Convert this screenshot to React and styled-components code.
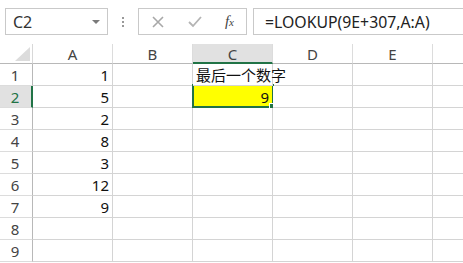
import styled, { createGlobalStyle } from 'styled-components';

const GlobalStyle = createGlobalStyle`
  html, body {
    margin: 0;
    background: #ffffff;
    overflow: hidden;
  }
  body {
    font-family: 'Noto Sans', 'Noto Sans CJK SC', sans-serif;
  }
`;

const GREEN = '#217346';
const COLS = ['A', 'B', 'C', 'D', 'E', ''];
const VALUES = { 1: '1', 2: '5', 3: '2', 4: '8', 5: '3', 6: '12', 7: '9' };

export default function App() {
  const rows = [1, 2, 3, 4, 5, 6, 7, 8, 9];
  return (
    <>
      <GlobalStyle />
      <Page>
        <FormulaBar>
          <NameBox>
            C2
            <DropArrow />
          </NameBox>
          <Grip>
            <i />
            <i />
            <i />
          </Grip>
          <ButtonBox>
            <svg width="14" height="14" viewBox="0 0 14 14">
              <path d="M2 2 L12 12 M12 2 L2 12" stroke="#a8a8a8" strokeWidth="1.6" fill="none" />
            </svg>
            <svg width="16" height="14" viewBox="0 0 16 14">
              <path d="M2 7 L6 11 L14 2" stroke="#b4b4b4" strokeWidth="1.8" fill="none" />
            </svg>
            <Fx>
              f<sub>x</sub>
            </Fx>
          </ButtonBox>
          <FormulaInput>=LOOKUP(9E+307,A:A)</FormulaInput>
        </FormulaBar>

        <Sheet>
          <Corner>
            <svg width="15" height="14" viewBox="0 0 15 14">
              <path d="M15 0 L15 14 L0 14 Z" fill="#dcdcdc" />
            </svg>
          </Corner>
          {COLS.map((c) => (
            <ColHead key={c || 'F'} $active={c === 'C'}>
              {c}
            </ColHead>
          ))}
          {rows.map((r) => (
            <Row key={r}>
              <RowHead $active={r === 2}>{r}</RowHead>
              <Cell $num>{VALUES[r] || ''}</Cell>
              <Cell />
              {r === 1 && <Cell $label>最后一个数字</Cell>}
              {r === 2 && (
                <Cell $num $fill="#ffff00">
                  9
                  <Selection>
                    <Handle />
                  </Selection>
                </Cell>
              )}
              {r > 2 && <Cell />}
              <Cell />
              <Cell />
              <Cell />
            </Row>
          ))}
        </Sheet>
      </Page>
    </>
  );
}

const Page = styled.div`
  width: 463px;
  height: 263px;
  overflow: hidden;
`;

const FormulaBar = styled.div`
  display: flex;
  align-items: flex-start;
  height: 44px;
  padding: 8px 0 0 5px;
  box-sizing: border-box;
`;

const Box = styled.div`
  box-sizing: border-box;
  height: 27px;
  border: 1px solid #c9c9c9;
  background: #fff;
  display: flex;
  align-items: center;
`;

const NameBox = styled(Box)`
  width: 103px;
  padding-left: 7px;
  font-size: 16px;
  color: #333;
  position: relative;
`;

const DropArrow = styled.span`
  position: absolute;
  right: 7px;
  top: 11px;
  width: 0;
  height: 0;
  border-left: 4px solid transparent;
  border-right: 4px solid transparent;
  border-top: 4px solid #7a7a7a;
`;

const Grip = styled.div`
  width: 30px;
  height: 27px;
  display: flex;
  flex-direction: column;
  align-items: center;
  justify-content: center;
  gap: 2px;

  i {
    display: block;
    width: 2px;
    height: 2px;
    background: #999;
  }
`;

const ButtonBox = styled(Box)`
  width: 109px;
  padding: 0 12px 0 12px;
  justify-content: space-between;
`;

const Fx = styled.span`
  font-family: 'Liberation Serif', serif;
  font-style: italic;
  font-size: 15px;
  color: #444;
  sub {
    font-size: 11px;
    vertical-align: baseline;
  }
`;

const FormulaInput = styled(Box)`
  margin-left: 6px;
  flex: 1;
  margin-right: -20px;
  padding-left: 11px;
  font-size: 15.8px;
  color: #222;
`;

const Sheet = styled.div`
  display: grid;
  grid-template-columns: 33px repeat(5, 80px) 40px;
  grid-template-rows: 20px;
  grid-auto-rows: 22px;
  font-size: 15px;
`;

const Row = styled.div`
  display: contents;
`;

const Corner = styled.div`
  border-bottom: 1px solid #b8b8b8;
  border-right: 1px solid #d8d8d8;
  display: flex;
  align-items: flex-end;
  justify-content: flex-end;
  padding: 0 2px 2px 0;
  box-sizing: border-box;
`;

const ColHead = styled.div`
  box-sizing: border-box;
  border-right: 1px solid #dcdcdc;
  border-bottom: ${(p) => (p.$active ? `2px solid ${GREEN}` : '1px solid #b8b8b8')};
  background: ${(p) => (p.$active ? '#e1e1e1' : '#fff')};
  color: #444;
  display: flex;
  align-items: center;
  justify-content: center;
  padding-top: ${(p) => (p.$active ? '1px' : '0')};
`;

const RowHead = styled.div`
  box-sizing: border-box;
  border-bottom: 1px solid #dcdcdc;
  border-right: ${(p) => (p.$active ? `2px solid ${GREEN}` : '1px solid #b8b8b8')};
  background: ${(p) => (p.$active ? '#e1e1e1' : '#fff')};
  color: ${(p) => (p.$active ? GREEN : '#444')};
  display: flex;
  align-items: center;
  justify-content: center;
  padding-right: ${(p) => (p.$active ? '1px' : '2px')};
`;

const Cell = styled.div`
  position: relative;
  box-sizing: border-box;
  border-right: 1px solid #d4d4d4;
  border-bottom: 1px solid #d4d4d4;
  background: ${(p) => p.$fill || '#fff'};
  color: #111;
  display: flex;
  align-items: center;
  justify-content: ${(p) => (p.$num ? 'flex-end' : 'flex-start')};
  padding: ${(p) => (p.$num ? '0 3px 0 0' : '0 0 0 3px')};
  white-space: nowrap;
  overflow: visible;
  font-family: ${(p) =>
    p.$label ? "'Noto Sans CJK SC', sans-serif" : "'Noto Sans', 'Noto Sans CJK SC', sans-serif"};
  z-index: ${(p) => (p.$label ? 1 : 0)};
`;

const Selection = styled.div`
  position: absolute;
  left: -1px;
  top: -2px;
  right: -2px;
  bottom: -1px;
  border: 2px solid ${GREEN};
  pointer-events: none;
`;

const Handle = styled.div`
  position: absolute;
  right: -4px;
  bottom: -4px;
  width: 5px;
  height: 5px;
  background: ${GREEN};
  border: 1px solid #fff;
`;
